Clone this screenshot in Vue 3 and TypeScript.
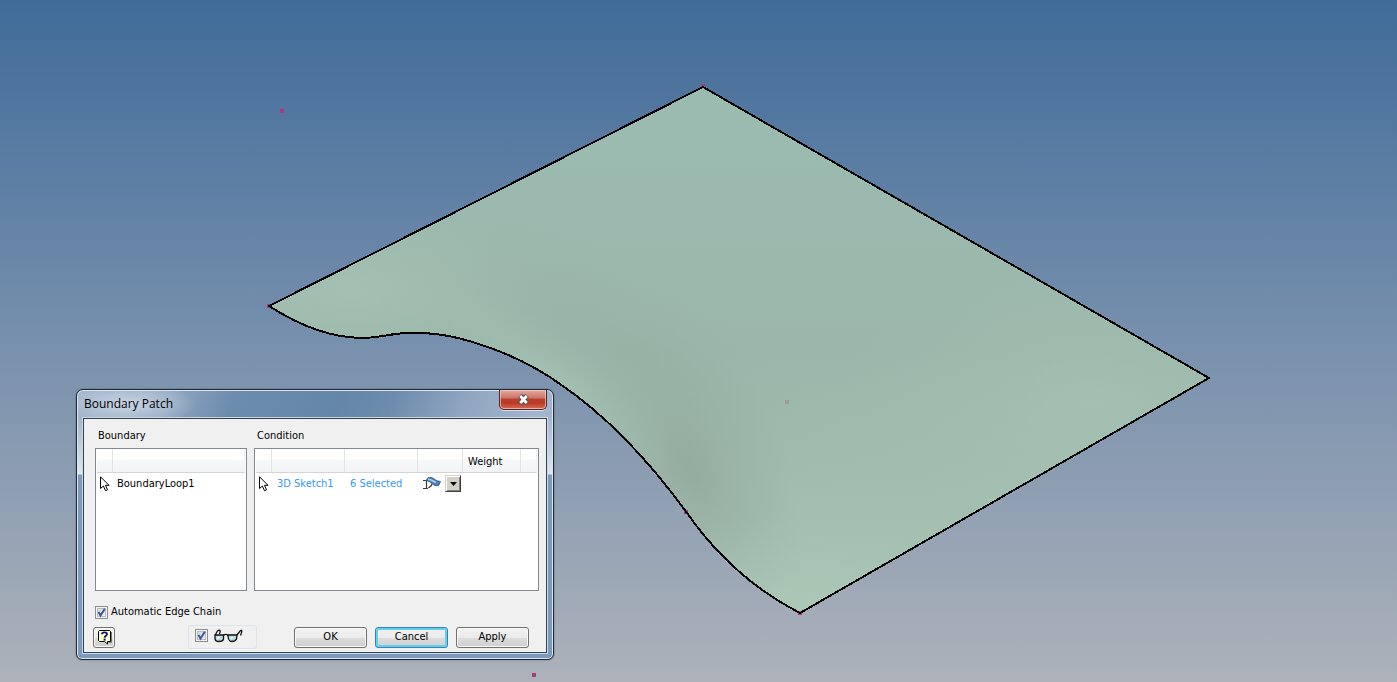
<script setup lang="ts">
import { ref } from 'vue'

interface Point {
  x: number
  y: number
  tone: 'solid' | 'faint'
}

const freePoints: Point[] = [
  { x: 280, y: 109, tone: 'solid' },
  { x: 532, y: 673, tone: 'solid' },
  { x: 785, y: 400, tone: 'faint' },
]
const edgePoints: Point[] = [
  { x: 267, y: 304, tone: 'solid' },
  { x: 381, y: 334, tone: 'faint' },
  { x: 684, y: 510, tone: 'solid' },
  { x: 798, y: 611, tone: 'solid' },
  { x: 701, y: 84, tone: 'solid' },
]

const surface =
  'M269 306 L703 87 L1209 378 L800 613 C757 591 720 560 687 513 C650 462 607 416 560 384 C532 364 497 348 458 338 C432 332 407 331 383 336 C345 343 308 331 269 306 Z'

const edgeChain = ref(true)
const preview = ref(true)
const condition = ref('contact')
</script>

<template>
  <main class="viewport">
    <svg class="scene" viewBox="0 0 1397 682" preserveAspectRatio="xMinYMin meet" aria-hidden="true">
      <defs>
        <linearGradient id="base" x1="0" y1="0" x2="0" y2="1">
          <stop offset="0" stop-color="#9bbbb1" />
          <stop offset="0.5" stop-color="#9bb7ab" />
          <stop offset="1" stop-color="#a8c4b4" />
        </linearGradient>
        <radialGradient id="dark">
          <stop offset="0" stop-color="#91a79a" stop-opacity="0.8" />
          <stop offset="0.5" stop-color="#94ab9f" stop-opacity="0.4" />
          <stop offset="1" stop-color="#97b0a4" stop-opacity="0" />
        </radialGradient>
        <radialGradient id="light">
          <stop offset="0" stop-color="#adc9b7" stop-opacity="0.9" />
          <stop offset="0.5" stop-color="#a9c6b5" stop-opacity="0.45" />
          <stop offset="1" stop-color="#a4c2b3" stop-opacity="0" />
        </radialGradient>
        <clipPath id="patch"><path :d="surface" /></clipPath>
      </defs>
      <path :d="surface" fill="url(#base)" />
      <g clip-path="url(#patch)">
        <ellipse cx="1090" cy="400" rx="250" ry="140" fill="url(#light)" opacity="0.45" />
        <ellipse cx="350" cy="290" rx="220" ry="90" fill="url(#light)" opacity="0.55" />
        <ellipse cx="620" cy="345" rx="270" ry="80" fill="url(#dark)" opacity="0.35" transform="rotate(28 620 345)" />
        <ellipse cx="692" cy="470" rx="170" ry="95" fill="url(#dark)" transform="rotate(66 692 470)" />
        <ellipse cx="550" cy="378" rx="150" ry="42" fill="url(#light)" opacity="0.5" transform="rotate(38 550 378)" />
        <ellipse cx="810" cy="600" rx="190" ry="90" fill="url(#light)" opacity="0.7" />
      </g>
      <rect
        v-for="p in edgePoints"
        :key="`${p.x}-${p.y}`"
        :x="p.x"
        :y="p.y"
        width="4"
        height="4"
        :class="['point', p.tone]"
      />
      <path :d="surface" class="outline" />
      <rect
        v-for="p in freePoints"
        :key="`${p.x}-${p.y}`"
        :x="p.x"
        :y="p.y"
        width="4"
        height="4"
        :class="['point', p.tone]"
      />
    </svg>

    <section class="dialog" role="dialog" aria-labelledby="dialog-title">
      <header class="titlebar">
        <h1 id="dialog-title">Boundary Patch</h1>
        <button class="close" type="button" aria-label="Close">
          <svg width="13" height="11" viewBox="0 0 13 11">
            <path d="M3 1.500 L10 9.500 M10 1.500 L3 9.500" stroke="#54565f" stroke-width="5" fill="none" />
            <path d="M3.300 2 L9.700 9 M9.700 2 L3.300 9" stroke="#fff" stroke-width="2.800" fill="none" />
          </svg>
        </button>
      </header>

      <form class="client" @submit.prevent>
        <div class="lists">
          <div class="boundary">
            <h2 id="boundary-label">Boundary</h2>
            <div class="listbox">
              <table aria-labelledby="boundary-label">
                <colgroup><col class="c-pick" /><col /></colgroup>
                <thead>
                  <tr><th></th><th class="last"></th></tr>
                </thead>
                <tbody>
                  <tr>
                    <td class="pick">
                      <svg width="10" height="16" viewBox="0 0 10 16">
                        <path d="M.5 .8 V12.5 L3.4 10 L5.5 14.7 L7.5 13.8 L5.5 9.3 H9 Z" fill="#fff" stroke="#000" />
                      </svg>
                    </td>
                    <td class="name">BoundaryLoop1</td>
                  </tr>
                </tbody>
              </table>
            </div>
          </div>

          <div class="condition">
            <h2 id="condition-label">Condition</h2>
            <div class="listbox">
              <table aria-labelledby="condition-label">
                <colgroup>
                  <col class="c-pick" /><col class="c-text" /><col class="c-text" />
                  <col class="c-kind" /><col class="c-weight" /><col />
                </colgroup>
                <thead>
                  <tr><th></th><th></th><th></th><th></th><th>Weight</th><th class="last"></th></tr>
                </thead>
                <tbody>
                  <tr>
                    <td class="pick">
                      <svg width="10" height="16" viewBox="0 0 10 16">
                        <path d="M.5 .8 V12.5 L3.4 10 L5.5 14.7 L7.5 13.8 L5.5 9.3 H9 Z" fill="#fff" stroke="#000" />
                      </svg>
                    </td>
                    <td class="link">3D Sketch1</td>
                    <td class="link">6 Selected</td>
                    <td class="kind">
                      <div class="kind-row">
                        <svg width="18" height="13" viewBox="0 0 18 13">
                          <path d="M0 3.500 H4 M3.500 3.500 V11.500 M0 11.500 H5 M5.500 11 C6 9.500 9 10 9 6.500" fill="none" stroke="#3c3c40" stroke-width="1.200" />
                          <path d="M3 3.500 L5 .8 C8 .3 10 .8 12 2.500 C14 4.300 16 4 17.500 4.500 L15.500 8.700 C12 9 10.500 8 8.500 6.200 C7 4.800 5.500 4 3 3.500 Z" fill="#4a82bb" stroke="#27496f" stroke-width=".8" />
                          <path d="M5 2.500 C8.500 2 9.500 4.500 13 5.500" fill="none" stroke="#a9cdea" stroke-width="1.800" />
                        </svg>
                        <span class="drop">
                          <select v-model="condition" aria-label="Edge condition">
                            <option value="contact"></option>
                          </select>
                          <svg width="7" height="4" viewBox="0 0 7 4"><path d="M0 0 H7 L3.500 4 Z" /></svg>
                        </span>
                      </div>
                    </td>
                    <td></td>
                    <td></td>
                  </tr>
                </tbody>
              </table>
            </div>
          </div>
        </div>

        <label class="check chain">
          <input v-model="edgeChain" type="checkbox" />
          <svg class="tick" viewBox="0 0 13 13"><path d="M3.500 6 L5.500 9.500 L9.800 2.800" /></svg>
          <span>Automatic Edge Chain</span>
        </label>

        <div class="footer">
          <button class="push help" type="button" aria-label="Help">
            <svg width="15" height="16" viewBox="0 0 15 16">
              <path d="M14.500 3 V13.500 H11.500" fill="none" stroke="#777" />
              <path d="M2.500 1.500 H12.500 L13.500 2.500 V12.500 H10.500 V15 L7.500 12.500 H2.500 L1.500 11.500 V2.500 Z" fill="#ffffc8" stroke="#000" />
              <path d="M5 5.300 C5 2.800 10 2.800 10 5.300 C10 6.700 7.600 6.700 7.600 8.700" fill="none" stroke="#101080" stroke-width="1.800" />
              <rect x="6.600" y="9.600" width="2" height="2" fill="#101080" />
            </svg>
          </button>
          <label class="check preview" aria-label="Preview">
            <input v-model="preview" type="checkbox" />
            <svg class="tick" viewBox="0 0 13 13"><path d="M3.500 6 L5.500 9.500 L9.800 2.800" /></svg>
            <svg width="29" height="14" viewBox="0 0 29 14">
              <path d="M1 6 H9.500 V10 C9 12.500 7.500 12.500 5 12.500 C2 12.500 1 11.500 1 9 Z M14 6 H23 L22.500 10 C21.500 12 20 12.500 18 12.500 C15 12.500 14 11 14 6 Z" fill="#b9dcdc" stroke="#111" stroke-width="1.300" />
              <path d="M9.500 6.500 C11 5 12.500 5 14 6.500 M1.500 6 C2.500 3 4 1.200 5.500 1.200 C7 1.500 5.500 4 5.500 5 M23 6 L26.500 1.500 C28.500 .5 28 3 26.500 6.500" fill="none" stroke="#111" stroke-width="1.300" />
              <path d="M3 9.500 L5.500 8 M16.500 9.500 L19 8" stroke="#fff" stroke-width="1.200" />
            </svg>
          </label>
          <div class="actions">
            <button class="push" type="submit">OK</button>
            <button class="push focus" type="button">Cancel</button>
            <button class="push" type="button">Apply</button>
          </div>
        </div>
      </form>
    </section>
  </main>
</template>

<style>
body {
  margin: 0;
}
</style>

<style scoped>
.viewport {
  position: relative;
  height: 100vh;
  overflow: hidden;
  background: linear-gradient(#406b99, #7790ad 50%, #adb2ba);
  color: #000;
  font: 11px/14px "DejaVu Sans Condensed", "Noto Sans", sans-serif;
}
.scene {
  display: block;
  width: 100%;
  height: 100%;
}
.outline {
  fill: none;
  stroke: #000;
  stroke-width: 2;
  stroke-linejoin: round;
  shape-rendering: crispEdges;
}
.point.solid {
  fill: #a83c78;
}
.point.faint {
  fill: #a09a9c;
}

/* window frame */
.dialog {
  position: absolute;
  left: 76px;
  top: 389px;
  box-sizing: border-box;
  width: 478px;
  padding: 0 6px 6px;
  border: 1px solid #1c2733;
  border-radius: 7px 7px 6px 6px;
  background:
    radial-gradient(ellipse 70px 22px at 50px 14px, rgba(211, 220, 232, 0.85), rgba(190, 204, 221, 0) 100%),
    linear-gradient(110deg, #9fb2c9 0, #8fa6c0 90px, #6c8cae 150px, #6486a9 250px, #6d8cad 300px, #90a6c1 370px, #a3b5cc 440px) 0 0 / 100% 28px no-repeat,
    linear-gradient(#a3b6cd 28px, #dfe7f0 84px, #7b9abc 85px, #7b9abc);
  box-shadow:
    inset 0 0 0 1px #dfe8f1,
    0 0 2px rgba(30, 40, 55, 0.45);
}
.titlebar {
  display: flex;
  justify-content: space-between;
  align-items: flex-start;
  height: 28px;
  padding-left: 1px;
}
.titlebar h1 {
  margin: 0;
  padding-top: 6px;
  font: 12px/16px "Open Sans", "Noto Sans", sans-serif;
}
.close {
  display: flex;
  justify-content: center;
  align-items: center;
  box-sizing: border-box;
  width: 48px;
  height: 20px;
  padding: 0;
  border: 1px solid #4a2831;
  border-top: 0;
  border-radius: 0 0 5px 5px;
  background: linear-gradient(#e3a79f, #cf7468 8px, #b8402c 9px, #b83a23 13px, #d66b53);
  box-shadow:
    inset 0 0 0 1px rgba(255, 210, 200, 0.65),
    0 1px 0 rgba(255, 255, 255, 0.6);
}
.client {
  padding: 10px 7px 3px 11px;
  border: 1px solid #34424f;
  outline: 1px solid #cbd9e7;
  background: #f0f0f0;
}

/* lists */
.lists {
  display: grid;
  grid-template-columns: 152fr 285fr;
  gap: 7px;
}
h2 {
  margin: 0 0 5px 3px;
  font: inherit;
}
.listbox {
  box-sizing: border-box;
  height: 143px;
  padding: 0 1px;
  border: 1px solid #828790;
  background: #fff;
}
table {
  width: 100%;
  border-collapse: separate;
  border-spacing: 0;
  table-layout: fixed;
}
th,
td {
  box-sizing: border-box;
  padding: 0 5px;
  font-weight: normal;
  text-align: left;
  white-space: nowrap;
}
th {
  height: 24px;
  padding-top: 2px;
  border-right: 1px solid #e2e3e6;
  border-bottom: 1px solid #d5d5d5;
  background: linear-gradient(#fff 10px, #f7f8fa 11px, #f2f3f5);
}
th.last {
  border-right-color: #f0f0f0;
}
td {
  height: 21px;
}
td.pick {
  padding: 0 0 0 3px;
}
td.pick svg,
.kind-row svg {
  display: block;
}
td.name {
  padding-left: 4px;
}
td.link {
  color: #3399ff;
}
.c-pick {
  width: 16px;
}
.c-text {
  width: 73px;
}
.c-kind {
  width: 45px;
}
.c-weight {
  width: 58px;
}
.kind-row {
  display: flex;
  align-items: center;
  gap: 4px;
}
.kind-row > svg {
  flex: none;
}
.drop {
  display: grid;
  flex: none;
  place-items: center;
  width: 16px;
  height: 17px;
}
.drop > * {
  grid-area: 1 / 1;
}
.drop select {
  appearance: none;
  box-sizing: border-box;
  width: 100%;
  height: 100%;
  padding: 0;
  border: 1px solid;
  border-color: #d4d0c8 #404040 #404040 #d4d0c8;
  border-radius: 0;
  background: #d4d0c8;
  box-shadow:
    inset 1px 1px 0 #fff,
    inset -1px -1px 0 #808080;
}
.drop svg {
  pointer-events: none;
}

/* check boxes */
.check {
  display: grid;
  grid-template-columns: 13px auto;
  align-items: center;
  justify-content: start;
  column-gap: 3px;
}
.check input {
  grid-area: 1 / 1;
  appearance: none;
  box-sizing: border-box;
  width: 13px;
  height: 13px;
  margin: 0;
  border: 1px solid #8e8f8f;
  background: linear-gradient(135deg, #cfd3da, #f6f6f6);
  box-shadow:
    inset 0 0 0 1px #f4f4f4,
    inset 0 0 0 2px #b7bcc4;
}
.tick {
  grid-area: 1 / 1;
  width: 13px;
  height: 13px;
  fill: none;
  stroke: #41599c;
  stroke-width: 2;
  pointer-events: none;
  visibility: hidden;
}
input:checked + .tick {
  visibility: visible;
}
.chain {
  margin-top: 14px;
}

/* buttons */
.footer {
  display: flex;
  align-items: center;
  margin: 6px 0 0 -2px;
}
.push {
  box-sizing: border-box;
  width: 73px;
  height: 21px;
  padding: 0;
  border: 1px solid #707070;
  border-radius: 3px;
  background: linear-gradient(#f2f2f2, #ebebeb 50%, #dddddd 51%, #cfcfcf);
  box-shadow: inset 0 0 0 1px #fafafa;
  color: #000;
  font: inherit;
}
.push.focus {
  border-color: #3c7fb1;
  box-shadow: inset 0 0 0 2px #5fd0f0;
}
.push.help {
  display: flex;
  justify-content: center;
  align-items: center;
  width: 22px;
}
.preview {
  grid-template-columns: 13px 29px;
  column-gap: 6px;
  box-sizing: border-box;
  width: 69px;
  height: 24px;
  margin-left: 73px;
  padding: 0 6px 3px;
  border: 1px solid #dce4ec;
  border-radius: 3px;
}
.actions {
  display: flex;
  gap: 8px;
  margin-left: auto;
  margin-right: 10px;
}
</style>
